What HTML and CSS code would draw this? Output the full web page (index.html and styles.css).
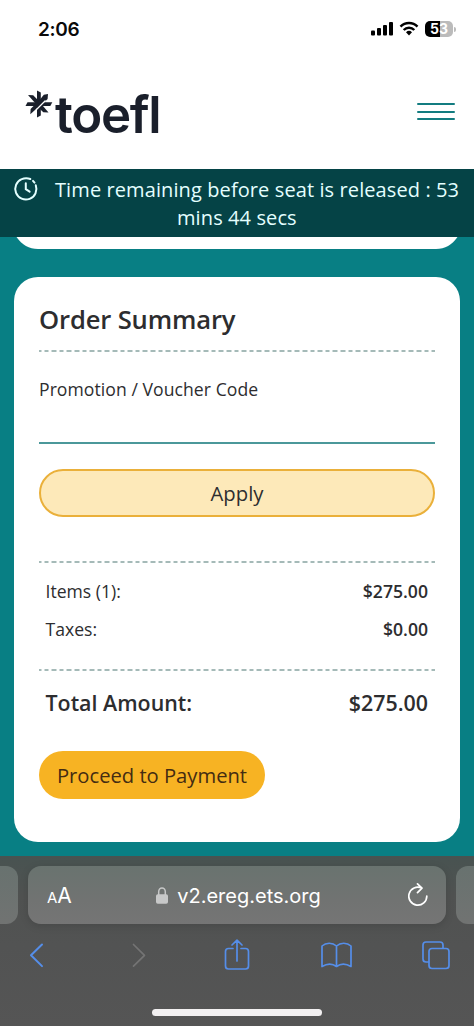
FILE: index.html
```html
<!DOCTYPE html>
<html lang="en">
<head>
<meta charset="utf-8">
<meta name="viewport" content="width=device-width, initial-scale=1">
<title>TOEFL Order Summary</title>
<link rel="stylesheet" href="styles.css">
</head>
<body>
<div class="phone">
  <div class="status">
    <span class="clock">2:06</span>
    <div class="status-icons">
      <svg class="signal" width="22" height="15" viewBox="0 0 22 15"><rect x="0" y="9.5" width="4" height="5" rx="1"/><rect x="6" y="7" width="4" height="7.500" rx="1"/><rect x="12" y="4" width="4" height="10.500" rx="1"/><rect x="18" y="1" width="4" height="13.500" rx="1"/></svg>
      <svg class="wifi" width="20" height="15" viewBox="0 0 20 15"><path d="M1.500 5.600a12 12 0 0 1 17 0M4.700 9a7.400 7.400 0 0 1 10.600 0" fill="none" stroke="#000" stroke-width="2.500"/><path d="M7 11.200a4.300 4.300 0 0 1 6 0l-3 3.200z"/></svg>
      <div class="battery"><span class="level">53</span><i class="cap"></i></div>
    </div>
  </div>
  <header class="brand">
    <div class="logo">
      <svg class="star" width="28" height="28" viewBox="0 0 28 28"><g fill="#1a1f2b"><path d="M12 .5l3.800 2v12H12z"/><path d="M12 13h3.800v12.500l-3.800 2z"/><path d="M.5 16l2-3.800h12V16z"/><path d="M13.500 16v-3.800h13.800l-2 3.800z"/><path d="M3 5l5.200.3 7.800 7.900-3 3z"/><path d="M23 4l-.4 5-8.100 8-3-3 7.300-9.200z"/><path d="M5.300 24.200l.3-5.200 6.400-6.400 3 3z"/><path d="M15 12.500l8.500 10-5.200-.2-6.300-6z"/></g><path d="M11 20l9.500-9.500" stroke="#fff" stroke-width="1.200"/></svg>
      <span class="wordmark">toefl</span>
    </div>
    <div class="menu"><i></i><i></i><i></i></div>
  </header>
  <div class="timer">
    <svg class="timer-icon" width="26" height="26" viewBox="0 0 26 26" fill="none" stroke="#e4ffff" stroke-width="2" stroke-linecap="round"><path d="M17.300 3A10.600 10.600 0 0 0 8.700 3.200A10.600 10.600 0 1 0 22.800 9.300M20 4.900l1.500 1.700"/><path d="M12.800 7.200v6l3.800 2.500"/></svg>
    <p class="timer-text"><span class="line1">Time remaining before seat is released : 53</span><br><span class="line2">mins 44 secs</span></p>
  </div>
  <main class="page">
    <section class="previous"></section>
    <section class="card">
      <h1 class="title"><span>Order Summary</span></h1>
      <div class="dashes"></div>
      <label class="promo"><span>Promotion / Voucher Code</span></label>
      <div class="field"></div>
      <button class="apply"><span>Apply</span></button>
      <div class="dashes"></div>
      <div class="row items"><span class="name">Items (1):</span><span class="price">$275.00</span></div>
      <div class="row taxes"><span class="name">Taxes:</span><span class="price">$0.00</span></div>
      <div class="dashes"></div>
      <div class="row total"><span>Total Amount:</span><span>$275.00</span></div>
      <button class="proceed"><span>Proceed to Payment</span></button>
    </section>
  </main>
  <footer class="browser">
    <div class="tabs">
      <div class="tab-edge left"></div>
      <div class="address">
        <span class="aa"><small>A</small>A</span>
        <div class="site">
          <svg width="12" height="17" viewBox="0 0 12 17"><rect y="7.300" width="12" height="9.500" rx="1.800" fill="#c7c8c8"/><path d="M2.700 8V4.700a3.300 3.700 0 0 1 6.600 0V8" fill="none" stroke="#c7c8c8" stroke-width="1.500"/></svg>
          <span class="url">v2.ereg.ets.org</span>
        </div>
        <svg class="reload" width="20" height="24" viewBox="0 0 20 24" fill="none" stroke="#fff" stroke-width="1.700" stroke-linecap="round" stroke-linejoin="round"><path d="M18.800 13A9 9 0 1 1 13.600 5M9.500 .9l4.500 4.200-4.500 4.600"/></svg>
      </div>
      <div class="tab-edge right"></div>
    </div>
    <nav class="tools">
      <svg width="474" height="40" viewBox="0 935 474 40" fill="none" stroke="#558ee9" stroke-width="1.700" stroke-linecap="round" stroke-linejoin="round">
        <path d="M42 944.500l-11 10.800 11 10.800" stroke-width="2"/>
        <path d="M133.500 944.500l11 10.800-11 10.800" stroke="#747474"/>
        <path d="M233 948.500h-4.500a3 3 0 0 0-3 3v14.500a3 3 0 0 0 3 3h17a3 3 0 0 0 3-3v-14.500a3 3 0 0 0-3-3H241M237 961v-20.500M232 945l5-4.800 5 4.800"/>
        <path d="M336.500 966.500c-4-3-9.500-3-14.500 0V946c4-3.700 10.500-3.700 14.500 0 4-3.700 10.500-3.700 14.500 0v20.500c-5-3-10.500-3-14.500 0zM336.500 946v20.500"/>
        <path d="M428.500 962h-2.500a3 3 0 0 1-3-3v-14a3 3 0 0 1 3-3h14a3 3 0 0 1 3 3v3"/><rect x="429" y="948.500" width="20" height="20" rx="3"/>
      </svg>
    </nav>
    <div class="home"></div>
  </footer>
</div>
</body>
</html>
```
FILE: styles.css
```css
* { box-sizing: border-box; }
body { margin: 0; background: #fff; font-family: "Open Sans", "Noto Sans", sans-serif; color: #2d2d2f; }
h1, p { margin: 0; font-weight: 400; }
svg { display: block; flex: none; }
button { font-family: inherit; color: inherit; padding: 0; cursor: pointer; }
.phone { width: 474px; height: 1026px; overflow: hidden; display: flex; flex-direction: column; background: #fff; }

.status { height: 58px; flex: none; display: flex; justify-content: space-between; padding: 19px 18px 0 38px; }
.clock { font: 600 19px/21px Inter, sans-serif; color: #0a0a0a; letter-spacing: -.3px; }
.status-icons { display: flex; align-items: flex-start; padding-top: 2px; }
.wifi { margin-left: 6px; }
.battery { display: flex; align-items: center; margin-left: 6px; }
.level { width: 28px; height: 16px; border-radius: 5px; background: linear-gradient(90deg, #000 53%, #bbb 53%); color: #fff; font: 700 14px/16px Inter, sans-serif; text-align: center; }
.cap { width: 2px; height: 5px; margin-left: 1px; border-radius: 0 2px 2px 0; background: #bbb; }

.brand { height: 111px; flex: none; display: flex; justify-content: space-between; padding: 32px 19px 0 25px; }
.logo { display: flex; align-items: flex-start; }
.wordmark { font: 600 51px/50px Inter, sans-serif; letter-spacing: -1.3px; color: #1a1f2b; margin-left: 2px; }
.menu { width: 38px; padding-top: 13px; display: flex; flex-direction: column; gap: 5.500px; }
.menu i { height: 2px; border-radius: 1px; background: #137c80; }

.timer { height: 68px; flex: none; display: flex; background: #054346; color: #e4ffff; padding: 7px 15px 0 13px; }
.timer-text { flex: 1; font-size: 20px; line-height: 28px; white-space: nowrap; padding-left: 16px; }
.line1 { letter-spacing: .1px; }
.line2 { margin-left: 122px; letter-spacing: .1px; }

.page { height: 619px; flex: none; background: #087f84; padding: 0 14px; }
.previous { height: 12px; margin-bottom: 28px; background: #fff; clip-path: path("M2.500 0H443.500C438 8 431 12 422 12H24C15 12 8 8 2.500 0Z"); }
.card { height: 564.500px; background: #fff; border-radius: 24px; padding: 23px 25px 0; display: flex; flex-direction: column; }
.title { font-size: 25.600px; line-height: 39px; height: 50px; font-weight: 600; letter-spacing: -.15px; }
.dashes { height: 2px; flex: none; background: repeating-linear-gradient(90deg, #a5bab8 0 4.600px, transparent 4.600px 7.600px); background-position: -2.500px 0; }
.promo { font-size: 17.600px; line-height: 24px; margin-top: 25px; letter-spacing: .05px; }
.field { height: 43px; flex: none; border-bottom: 2px solid #4b989a; }
.apply { height: 48px; margin: 25px 0 44px; border: 2.500px solid #eab03a; border-radius: 24px; background: #fde9b9; font-size: 20.300px; line-height: 43px; flex: none; }
.row { display: flex; justify-content: space-between; padding: 0 7px 0 6.500px; font-size: 17.600px; line-height: 24px; }
.items { margin-top: 16px; }
.taxes { margin: 14px 0 28px; }
.price { font-weight: 600; }
.total { margin-top: 16px; font-size: 21.400px; line-height: 32px; font-weight: 600; }
.proceed { width: 226px; height: 48px; margin-top: 32px; border: 0; border-radius: 24px; background: #f7b323; color: #442c12; font-size: 20.200px; line-height: 48px; white-space: nowrap; }

.browser { height: 170px; flex: none; padding-top: 10px; background: linear-gradient(#485351, #505251 40px, #525353 90px, #555); }
.tabs { display: flex; justify-content: space-between; height: 58px; }
.tab-edge { width: 18px; background: linear-gradient(#68726f, #717372); }
.left { border-radius: 0 12px 12px 0; }
.right { border-radius: 12px 0 0 12px; }
.address { width: 418px; margin: 0 10px; border-radius: 13px; background: linear-gradient(#69736f, #717372 60%, #757575); display: flex; align-items: center; justify-content: space-between; padding: 0 18px 0 19px; color: #fff; font-family: Inter, sans-serif; box-shadow: 0 2px 8px #0002; }
.aa { font-size: 21px; line-height: 24px; width: 27px; white-space: nowrap; padding-top: 4px; }
.aa small { font-size: 15px; }
.site { display: flex; align-items: center; gap: 9px; margin-right: 5px; }
.url { font-size: 20px; line-height: 24px; padding-top: 2px; }
.tools { height: 40px; margin-top: 11px; }
.home { width: 170px; height: 7px; border-radius: 4px; background: #f2f0f1; margin: 34px auto 0; }
```
